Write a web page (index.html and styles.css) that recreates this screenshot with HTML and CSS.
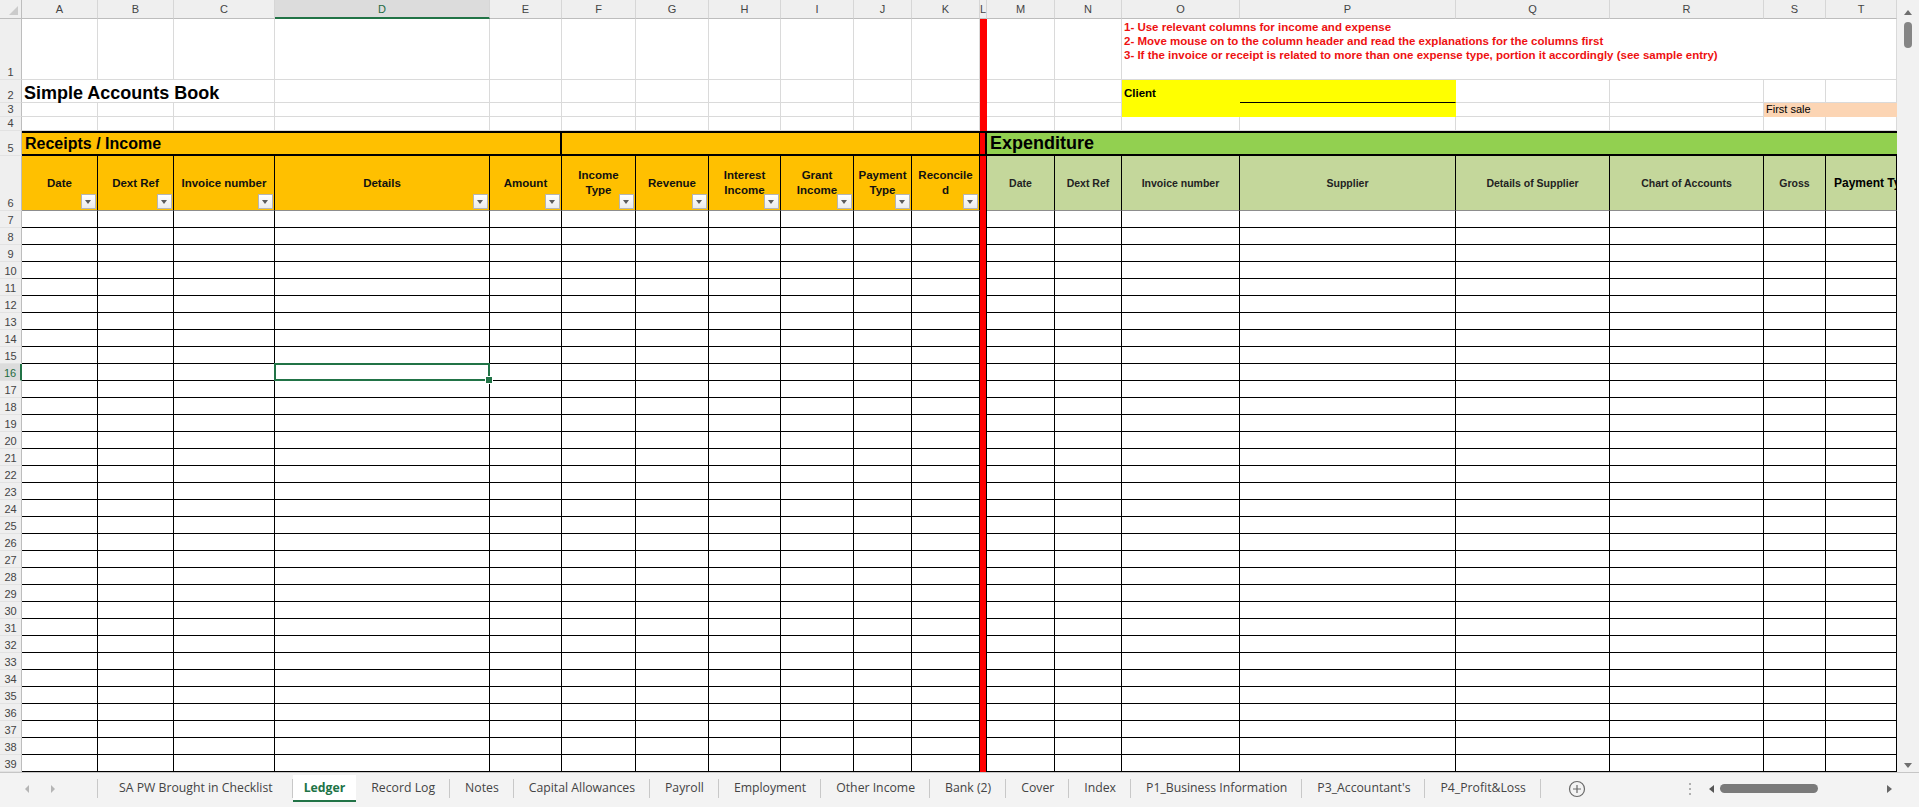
FILE: index.html
```html
<!DOCTYPE html>
<html lang="en">
<head>
    <meta charset="UTF-8">
    <meta name="viewport" content="width=device-width, initial-scale=1.0">
    <title>Ledger - Simple Accounts Book</title>
    <link rel="stylesheet" href="styles.css">
</head>
<body>

<div class="window">
    <div class="main">
        <div class="sheet" id="sheet">
            <!-- column letters -->
            <div class="corner"></div>
            <div class="col-head">A</div>
            <div class="col-head">B</div>
            <div class="col-head">C</div>
            <div class="col-head active">D</div>
            <div class="col-head">E</div>
            <div class="col-head">F</div>
            <div class="col-head">G</div>
            <div class="col-head">H</div>
            <div class="col-head">I</div>
            <div class="col-head">J</div>
            <div class="col-head">K</div>
            <div class="col-head">L</div>
            <div class="col-head">M</div>
            <div class="col-head">N</div>
            <div class="col-head">O</div>
            <div class="col-head">P</div>
            <div class="col-head">Q</div>
            <div class="col-head">R</div>
            <div class="col-head">S</div>
            <div class="col-head">T</div>

            <!-- row 1 : instructions -->
            <div class="row-head">1</div>
            <div class="cell"></div>
            <div class="cell"></div>
            <div class="cell"></div>
            <div class="cell"></div>
            <div class="cell"></div>
            <div class="cell"></div>
            <div class="cell"></div>
            <div class="cell"></div>
            <div class="cell"></div>
            <div class="cell"></div>
            <div class="cell"></div>
            <div class="cell red"></div>
            <div class="cell"></div>
            <div class="cell"></div>
            <div class="cell notes span-6">
                1- Use relevant columns for income and expense<br>
                2- Move mouse on to the column header and read the explanations for the columns first<br>
                3- If the invoice or receipt is related to more than one expense type, portion it accordingly (see sample entry)
            </div>

            <!-- row 2 : title + client -->
            <div class="row-head">2</div>
            <div class="cell title span-3">Simple Accounts Book</div>
            <div class="cell"></div>
            <div class="cell"></div>
            <div class="cell"></div>
            <div class="cell"></div>
            <div class="cell"></div>
            <div class="cell"></div>
            <div class="cell"></div>
            <div class="cell"></div>
            <div class="cell red"></div>
            <div class="cell"></div>
            <div class="cell"></div>
            <div class="cell yellow client">Client</div>
            <div class="cell yellow underline"></div>
            <div class="cell"></div>
            <div class="cell"></div>
            <div class="cell"></div>
            <div class="cell"></div>

            <!-- row 3 -->
            <div class="row-head">3</div>
            <div class="cell"></div>
            <div class="cell"></div>
            <div class="cell"></div>
            <div class="cell"></div>
            <div class="cell"></div>
            <div class="cell"></div>
            <div class="cell"></div>
            <div class="cell"></div>
            <div class="cell"></div>
            <div class="cell"></div>
            <div class="cell"></div>
            <div class="cell red"></div>
            <div class="cell"></div>
            <div class="cell"></div>
            <div class="cell yellow"></div>
            <div class="cell yellow"></div>
            <div class="cell"></div>
            <div class="cell"></div>
            <div class="cell peach span-2">First sale</div>

            <!-- row 4 -->
            <div class="row-head">4</div>
            <div class="cell"></div>
            <div class="cell"></div>
            <div class="cell"></div>
            <div class="cell"></div>
            <div class="cell"></div>
            <div class="cell"></div>
            <div class="cell"></div>
            <div class="cell"></div>
            <div class="cell"></div>
            <div class="cell"></div>
            <div class="cell"></div>
            <div class="cell red"></div>
            <div class="cell"></div>
            <div class="cell"></div>
            <div class="cell"></div>
            <div class="cell"></div>
            <div class="cell"></div>
            <div class="cell"></div>
            <div class="cell"></div>
            <div class="cell"></div>

            <!-- row 5 : section bands -->
            <div class="row-head">5</div>
            <div class="band income span-5">Receipts / Income</div>
            <div class="band income-rest span-6"></div>
            <div class="band red"></div>
            <div class="band spend span-8">Expenditure</div>

            <!-- row 6 : column titles -->
            <div class="row-head">6</div>
            <div class="head income">Date<span class="filter"></span></div>
            <div class="head income">Dext Ref<span class="filter"></span></div>
            <div class="head income">Invoice number<span class="filter"></span></div>
            <div class="head income">Details<span class="filter"></span></div>
            <div class="head income">Amount<span class="filter"></span></div>
            <div class="head income">Income<br>Type<span class="filter"></span></div>
            <div class="head income">Revenue<span class="filter"></span></div>
            <div class="head income">Interest<br>Income<span class="filter"></span></div>
            <div class="head income">Grant<br>Income<span class="filter"></span></div>
            <div class="head income">Payment<br>Type<span class="filter"></span></div>
            <div class="head income">Reconcile<br>d<span class="filter"></span></div>
            <div class="head red"></div>
            <div class="head spend">Date</div>
            <div class="head spend">Dext Ref</div>
            <div class="head spend">Invoice number</div>
            <div class="head spend">Supplier</div>
            <div class="head spend">Details of Supplier</div>
            <div class="head spend">Chart of Accounts</div>
            <div class="head spend">Gross</div>
            <div class="head spend clipped">Payment Type</div>
            <!-- rows 7-39 are added by the script below -->
        </div>

        <div class="vscroll">
            <span class="arrow-up"></span>
            <span class="v-thumb"></span>
            <span class="arrow-down"></span>
        </div>
    </div>

    <div class="tabbar">
        <div class="tab-nav">
            <span class="nav-left"></span>
            <span class="nav-right"></span>
        </div>
        <div class="tab first">SA PW Brought in Checklist</div>
        <div class="tab active">Ledger</div>
        <div class="tab">Record Log</div>
        <div class="tab">Notes</div>
        <div class="tab">Capital Allowances</div>
        <div class="tab">Payroll</div>
        <div class="tab">Employment</div>
        <div class="tab">Other Income</div>
        <div class="tab">Bank (2)</div>
        <div class="tab">Cover</div>
        <div class="tab">Index</div>
        <div class="tab">P1_Business Information</div>
        <div class="tab">P3_Accountant's</div>
        <div class="tab">P4_Profit&amp;Loss</div>
        <div class="add-sheet">
            <svg width="18" height="18" viewBox="0 0 18 18">
                <circle cx="9" cy="9" r="7.5" fill="none" stroke="#6a6a6a" stroke-width="1.2"/>
                <path d="M9 5v8M5 9h8" stroke="#6a6a6a" stroke-width="1.2"/>
            </svg>
        </div>
        <div class="hscroll">
            <svg class="dots" width="4" height="14" viewBox="0 0 4 14">
                <circle cx="2" cy="2" r="1" fill="#9a9a9a"/>
                <circle cx="2" cy="7" r="1" fill="#9a9a9a"/>
                <circle cx="2" cy="12" r="1" fill="#9a9a9a"/>
            </svg>
            <span class="h-left"></span>
            <span class="h-thumb"></span>
            <span class="h-right"></span>
        </div>
    </div>
</div>

<script>
    // Build the empty ledger rows 7 to 39
    const sheet = document.getElementById('sheet');
    let rows = '';

    for (let r = 7; r <= 39; r++) {
        rows += `<div class="row-head${r === 16 ? ' active' : ''}">${r}</div>`;
        for (let c = 0; c < 20; c++) {
            if (c === 11) {
                rows += '<div class="data red"></div>';
            } else if (r === 16 && c === 3) {
                rows += '<div class="data selected"></div>';
            } else {
                rows += '<div class="data"></div>';
            }
        }
    }

    sheet.insertAdjacentHTML('beforeend', rows);
</script>

</body>
</html>
```

FILE: styles.css
```css
* {
    box-sizing: border-box;
}

html,
body {
    margin: 0;
    padding: 0;
}

body {
    font-family: "Liberation Sans", Arial, sans-serif;
    background-color: #fff;
    color: #000;
    overflow: hidden;
}

.window {
    width: 1919px;
    height: 807px;
    display: flex;
    flex-direction: column;
}

.main {
    display: flex;
    height: 772px;
}

/* Spreadsheet grid */
.sheet {
    display: grid;
    grid-template-columns: 22px 76px 76px 101px 215px 72px 74px 73px 72px 73px 58px 68px 7px 68px 67px 118px 216px 154px 154px 62px 71px;
    grid-template-rows: 19px 61px 23px 14px 14px 25px 55px repeat(33, 17px);
    width: 1897px;
    overflow: hidden;
}

.span-2 { grid-column: span 2; }
.span-3 { grid-column: span 3; }
.span-5 { grid-column: span 5; }
.span-6 { grid-column: span 6; }
.span-8 { grid-column: span 8; }

.corner,
.col-head,
.row-head {
    background-color: #efefef;
    color: #444;
    font-size: 11px;
}

.corner {
    position: relative;
    border-right: 1px solid #bdbdbd;
    border-bottom: 1px solid #bdbdbd;
}

.corner::after {
    content: "";
    position: absolute;
    right: 3px;
    bottom: 3px;
    border-left: 9px solid transparent;
    border-bottom: 9px solid #cbcbcb;
}

.col-head {
    display: flex;
    align-items: center;
    justify-content: center;
    border-right: 1px solid #d6d6d6;
    border-bottom: 1px solid #bdbdbd;
    white-space: nowrap;
}

.col-head.active {
    background-color: #dcdcdc;
    color: #1e6b41;
    border-bottom: 2px solid #217346;
}

.row-head {
    display: flex;
    align-items: flex-end;
    justify-content: center;
    line-height: 13px;
    border-right: 1px solid #bdbdbd;
    border-bottom: 1px solid #e2e2e2;
}

.row-head.active {
    background-color: #dcdcdc;
    color: #1e6b41;
    border-right: 2px solid #217346;
}

/* plain cells with light gridlines */
.cell {
    border-right: 1px solid #dadada;
    border-bottom: 1px solid #dadada;
    min-width: 0;
}

.cell.red {
    background-color: #ff0000;
    border-color: transparent;
}

.notes {
    color: #ee1111;
    font-weight: bold;
    font-size: 11.5px;
    line-height: 14px;
    padding: 1px 2px;
    white-space: nowrap;
}

.title {
    display: flex;
    align-items: flex-end;
    padding-left: 2px;
    font-size: 18px;
    font-weight: bold;
    line-height: 18px;
    white-space: nowrap;
}

.yellow {
    background-color: #ffff00;
    border-color: transparent;
}

.cell.yellow.underline {
    border-bottom-color: #000;
}

.client {
    display: flex;
    align-items: flex-end;
    padding: 0 2px 2px;
    font-size: 11.5px;
    font-weight: bold;
    line-height: 13px;
}

.peach {
    background-color: #fcd5b4;
    border-color: transparent;
    font-size: 11px;
    line-height: 13px;
    padding-left: 2px;
    white-space: nowrap;
}

/* Section bands (row 5) */
.band {
    display: flex;
    align-items: center;
    padding-left: 3px;
    border-top: 2px solid #000;
    border-bottom: 2px solid #000;
    font-weight: bold;
    white-space: nowrap;
}

.band.income {
    background-color: #ffc000;
    font-size: 16px;
    border-right: 2px solid #000;
}

.band.income-rest {
    background-color: #ffc000;
    border-right: 1px solid #000;
}

.band.red {
    background-color: #ff0000;
    border-right: 2px solid #000;
    padding: 0;
}

.band.spend {
    background-color: #92d050;
    font-size: 18px;
}

/* Column titles (row 6) */
.head {
    position: relative;
    display: flex;
    align-items: center;
    justify-content: center;
    text-align: center;
    font-weight: bold;
    border-right: 1px solid #000;
    border-bottom: 1px solid #8d8d8d;
    min-width: 0;
}

.head.income {
    background-color: #ffc000;
    color: #111;
    font-size: 11.5px;
    line-height: 15px;
}

.head.red {
    background-color: #ff0000;
    border-bottom: none;
}

.head.spend {
    background-color: #c4d79b;
    color: #222;
    font-size: 10.5px;
}

.head.clipped {
    justify-content: flex-start;
    padding-left: 8px;
    font-size: 12px;
    color: #000;
    white-space: nowrap;
    overflow: hidden;
}

.filter {
    position: absolute;
    right: 1px;
    bottom: 1px;
    width: 15px;
    height: 15px;
    background: linear-gradient(#ffffff, #ebebeb);
    border: 1px solid #b5b5b5;
}

.filter::after {
    content: "";
    position: absolute;
    left: 3px;
    top: 5px;
    border-left: 3.5px solid transparent;
    border-right: 3.5px solid transparent;
    border-top: 4px solid #5a5a5a;
}

/* Ledger rows */
.data {
    border-right: 1px solid #000;
    border-bottom: 1px solid #000;
}

.data.red {
    background-color: #ff0000;
    border-bottom: none;
}

.data.selected {
    position: relative;
    z-index: 2;
}

.data.selected::after {
    content: "";
    position: absolute;
    top: -1px;
    left: -1px;
    right: -1px;
    bottom: -1px;
    border: 2px solid #217346;
}

.data.selected::before {
    content: "";
    position: absolute;
    right: -4px;
    bottom: -4px;
    width: 6px;
    height: 6px;
    background-color: #217346;
    border: 1px solid #fff;
    z-index: 3;
}

/* Vertical scrollbar */
.vscroll {
    width: 22px;
    background-color: #f1f1f1;
    display: flex;
    flex-direction: column;
    align-items: center;
    padding: 10px 0 4px;
}

.arrow-up {
    border-left: 4px solid transparent;
    border-right: 4px solid transparent;
    border-bottom: 5px solid #6f6f6f;
}

.arrow-down {
    margin-top: auto;
    border-left: 4px solid transparent;
    border-right: 4px solid transparent;
    border-top: 5px solid #6f6f6f;
}

.v-thumb {
    width: 8px;
    height: 26px;
    margin-top: 7px;
    border-radius: 4px;
    background-color: #858585;
}

/* Sheet tabs */
.tabbar {
    height: 35px;
    display: flex;
    align-items: flex-start;
    padding-top: 2px;
    background-color: #f3f3f3;
    border-top: 1px solid #c6c6c6;
    font-family: "Open Sans", "Liberation Sans", sans-serif;
    font-size: 12.25px;
    color: #444;
}

.tab-nav {
    position: relative;
    width: 98px;
    height: 27px;
    display: flex;
    align-items: center;
    gap: 22px;
    padding-left: 25px;
}

.tab-nav::after,
.tab::after {
    content: "";
    position: absolute;
    right: 0;
    top: 4px;
    bottom: 4px;
    width: 1px;
    background-color: #c8c8c8;
}

.nav-left {
    border-top: 4px solid transparent;
    border-bottom: 4px solid transparent;
    border-right: 4px solid #b5b5b5;
}

.nav-right {
    border-top: 4px solid transparent;
    border-bottom: 4px solid transparent;
    border-left: 4px solid #b5b5b5;
}

.tab {
    position: relative;
    height: 27px;
    line-height: 26px;
    padding: 0 15px;
    white-space: nowrap;
}

.tab.first {
    padding-left: 21px;
    padding-right: 20px;
}

.tab.active {
    background-color: #fff;
    color: #217346;
    font-weight: bold;
    padding: 0 11px;
    border-bottom: 2px solid #217346;
}

.tab.active::after {
    display: none;
}

.add-sheet {
    height: 27px;
    display: flex;
    align-items: center;
    margin-left: 27px;
}

.hscroll {
    margin-left: auto;
    width: 239px;
    height: 27px;
    display: flex;
    align-items: center;
    padding-left: 8px;
}

.h-left {
    margin-left: 17px;
    border-top: 4px solid transparent;
    border-bottom: 4px solid transparent;
    border-right: 5px solid #555;
}

.h-thumb {
    width: 98px;
    height: 9px;
    margin-left: 6px;
    border-radius: 5px;
    background-color: #7a7a7a;
}

.h-right {
    margin-left: 69px;
    border-top: 4px solid transparent;
    border-bottom: 4px solid transparent;
    border-left: 5px solid #666;
}
```
